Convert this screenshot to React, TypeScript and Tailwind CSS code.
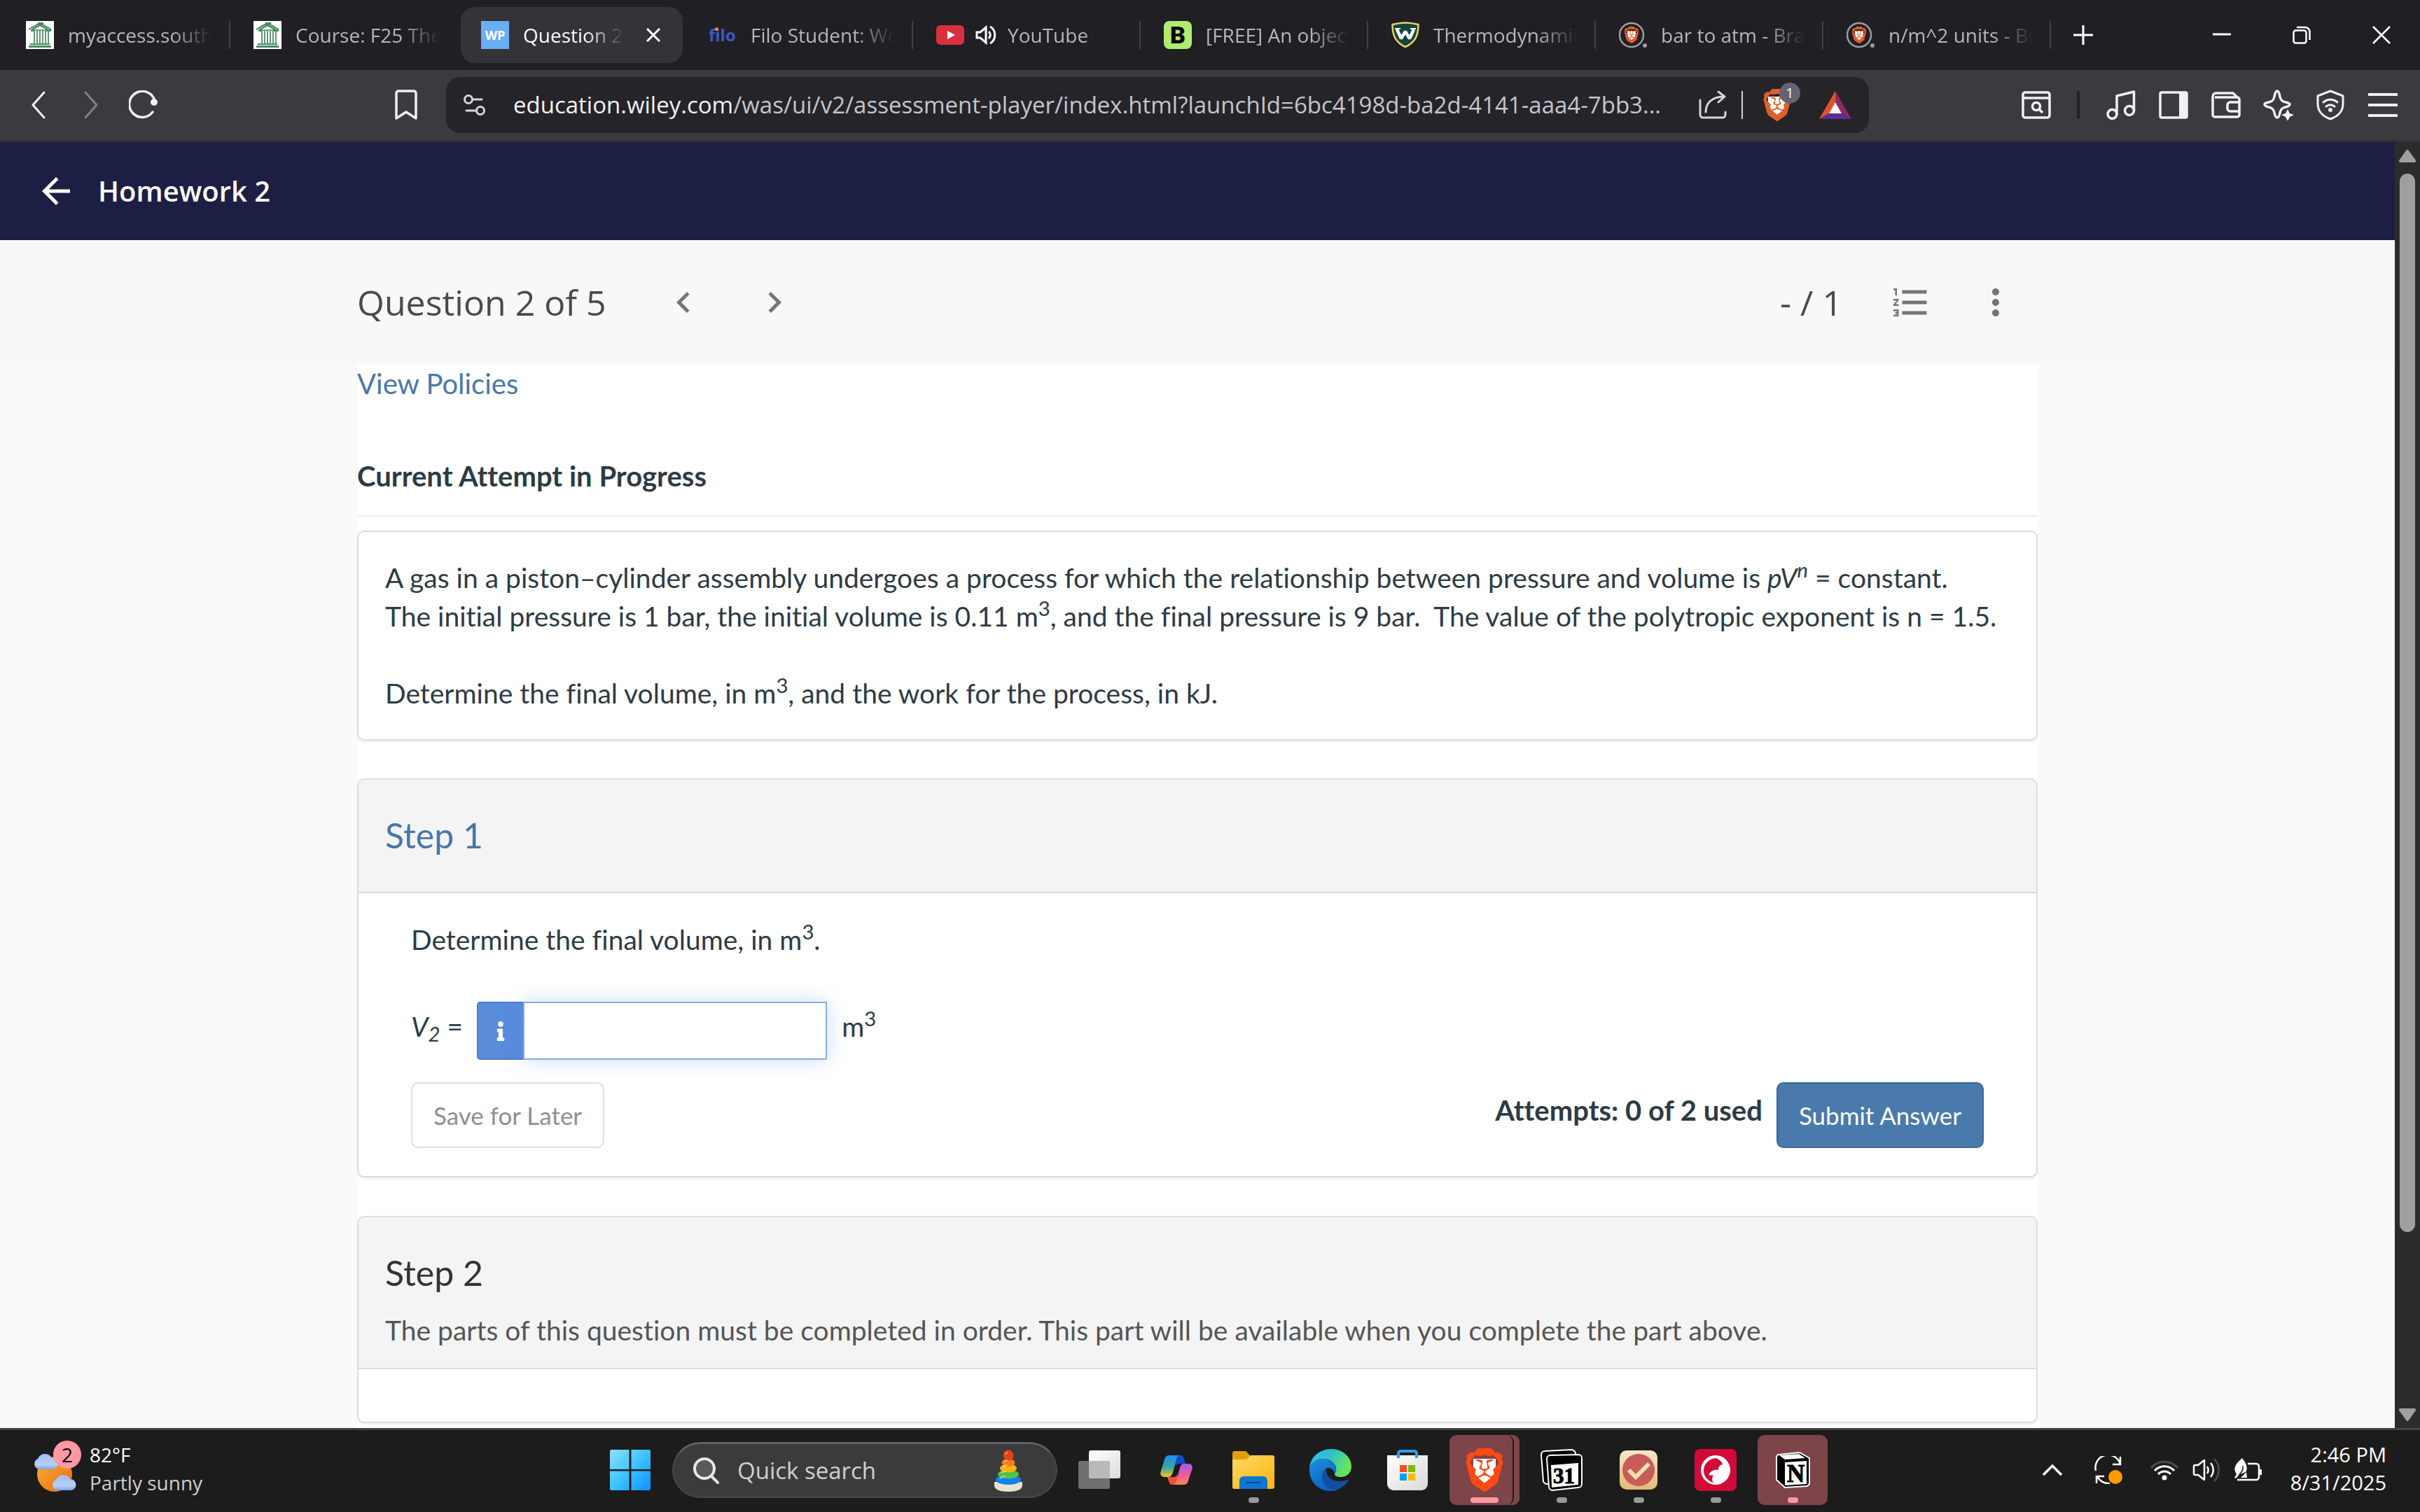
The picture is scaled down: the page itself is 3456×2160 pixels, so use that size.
import type { ReactNode } from 'react';
import { useState } from 'react';
import { FaInfo } from 'react-icons/fa';
import { MdArrowBack, MdChevronLeft, MdChevronRight, MdFormatListNumbered, MdMoreVert } from 'react-icons/md';
import { SiBrave } from 'react-icons/si';

interface Tab { id: string; title: string; icon: ReactNode; playing?: boolean }

function ColumnsIcon() {
  return (
    <svg viewBox="0 0 40 40" className="size-10">
      <path fill="#fff" d="M0 0h40v40H0z" />
      <path fill="none" stroke="#3f8159" strokeWidth="2" d="M4 12 20 3l16 9M9 12l11-6 11 6" />
      <path fill="#4c8a64" d="M17 2h8v4h-8zM4 35h32v3H4zM6 32h28v2H6zM7 12h5v3H7zM29 12h7v3h-7z" />
      <path stroke="#5d9a75" strokeWidth="2" d="M12 14v18M16 14v18M20 14v18M24 14v18M28 14v18M32 14v18" />
      <path stroke="#3f8159" strokeWidth="1.5" d="M11 13h23" />
    </svg>
  );
}

function YoutubeIcon() {
  return (
    <svg viewBox="0 0 40 40" className="size-10">
      <rect y="6" width="40" height="28" rx="6" fill="#d9303e" />
      <path fill="#fff" d="m16 14 11 6-11 6z" />
    </svg>
  );
}

function ShieldIcon() {
  return (
    <svg viewBox="0 0 40 40" className="size-10">
      <path fill="#14453d" stroke="#e9d65c" strokeWidth="2.500" d="M20 2.500c6 0 12 1 18.500 2.500C38.500 22 33 31 20 37 7 31 1.500 22 1.500 5 8 3.500 14 2.500 20 2.500z" />
      <path fill="none" stroke="#fff" strokeWidth="4.500" strokeLinejoin="bevel" d="m8 12 6 13 6-10 6 10 6-13" />
      <path stroke="#fff" strokeWidth="2" d="M5 11h8M27 11h8" />
    </svg>
  );
}

function BraveSearchIcon() {
  return (
    <span className="relative flex size-10 items-center justify-center">
      <svg viewBox="0 0 40 40" className="absolute size-10">
        <circle cx="18" cy="20" r="17" fill="none" stroke="#9c9ca3" strokeWidth="2.500" />
        <circle cx="37" cy="35" r="3" fill="#9c9ca3" />
        <path fill="#fff" d="M12 14h12v12l-6 5-6-5z" />
      </svg>
      <SiBrave className="relative mr-1 size-6 text-[#e9572e]" />
    </span>
  );
}

function FiloIcon() {
  return (
    <span className="relative flex size-10 items-center text-[24px] font-bold text-[#3f57c4]">
      filo
      <span className="absolute top-[9px] left-[9px] size-[5px] rounded-full bg-[#ee8a2c]" />
    </span>
  );
}

const TABS: Tab[] = [
  { id: 'access', title: 'myaccess.southalabama', icon: <ColumnsIcon /> },
  { id: 'course', title: 'Course: F25 Thermo', icon: <ColumnsIcon /> },
  { id: 'question', title: 'Question 2 of 5', icon: <span className="flex size-10 items-center justify-center bg-[#6aaef5] text-[18px] font-bold text-white">WP</span> },
  { id: 'filo', title: 'Filo Student: World', icon: <FiloIcon /> },
  { id: 'youtube', title: 'YouTube', icon: <YoutubeIcon />, playing: true },
  { id: 'brainly', title: '[FREE] An object is', icon: <span className="flex size-10 items-center justify-center rounded-lg bg-[#b1ec70] font-['Roboto',sans-serif] text-[34px] leading-none font-black text-black">B</span> },
  { id: 'thermo', title: 'Thermodynamics', icon: <ShieldIcon /> },
  { id: 'atm', title: 'bar to atm - Brave', icon: <BraveSearchIcon /> },
  { id: 'units', title: 'n/m^2 units - Brave', icon: <BraveSearchIcon /> },
];

const FADE = '[mask-image:linear-gradient(to_right,black_calc(100%-56px),transparent)]';

function BrowserTab({ tab, active, divided, onSelect }: { tab: Tab; active: boolean; divided: boolean; onSelect: () => void }) {
  if (active) {
    return (
      <div className="w-[325px] shrink-0 px-1">
        <div className="flex h-20 items-center rounded-[20px] bg-[#343338] pr-8 pl-[29px] text-white">
          {tab.icon}
          <button onClick={onSelect} className={`ml-5 flex-1 overflow-hidden text-left whitespace-nowrap ${FADE}`}>{tab.title}</button>
          <button aria-label="Close tab" className="ml-8">
            <svg viewBox="0 0 20 20" className="size-5"><path stroke="#fff" strokeWidth="3" d="m1 1 18 18M19 1 1 19" /></svg>
          </button>
        </div>
      </div>
    );
  }
  return (
    <button onClick={onSelect} className="flex h-20 w-[325px] shrink-0 items-center pl-[33px] text-[#b7b7bb]">
      {tab.icon}
      {tab.playing && (
        <svg viewBox="0 0 30 30" className="ml-4 size-[30px]" fill="none" stroke="#fff" strokeWidth="3">
          <path d="M2 11h5l8-7v22l-8-7H2zM19 10c3 3 3 7 0 10M21 3c9 5 9 19 0 24" />
        </svg>
      )}
      <span className={`flex-1 overflow-hidden text-left whitespace-nowrap ${tab.playing ? 'ml-4' : 'ml-5'} ${FADE}`}>{tab.title}</span>
      <span className={`ml-[25px] h-10 w-[2px] ${divided ? 'bg-[#414046]' : ''}`} />
    </button>
  );
}

function TabStrip() {
  const [activeId, setActiveId] = useState('question');
  const activeIndex = TABS.findIndex((tab) => tab.id === activeId);
  return (
    <div className="flex h-[100px] shrink-0 items-center bg-[#201f24] pl-1 text-[28px]">
      {TABS.map((tab, index) => (
        <BrowserTab key={tab.id} tab={tab} active={tab.id === activeId} divided={index !== activeIndex - 1} onSelect={() => setActiveId(tab.id)} />
      ))}
      <button aria-label="New tab" className="ml-8">
        <svg viewBox="0 0 28 28" className="size-7"><path stroke="#fff" strokeWidth="3" d="M14 0v28M0 14h28" /></svg>
      </button>
      <div className="mr-[42px] ml-auto flex items-center gap-[88px] text-white">
        <button aria-label="Minimize"><svg viewBox="0 0 26 26" className="size-[26px]"><path stroke="currentColor" strokeWidth="3" d="M0 12h26" /></svg></button>
        <button aria-label="Restore">
          <svg viewBox="0 0 26 26" className="size-[26px]" fill="none" stroke="currentColor" strokeWidth="2.500">
            <rect x="1.500" y="6.500" width="18" height="18" rx="3" />
            <path d="M6 2h12a6.500 6.500 0 0 1 6.500 6.500V20" />
          </svg>
        </button>
        <button aria-label="Close"><svg viewBox="0 0 26 26" className="size-[26px]"><path stroke="currentColor" strokeWidth="2.500" d="m1 1 24 24M25 1 1 25" /></svg></button>
      </div>
    </div>
  );
}

function Toolbar() {
  return (
    <div className="flex h-[103px] shrink-0 items-center border-b-[3px] border-[#323136] bg-[#3b3a3f] text-[#f1f1f3]">
      <button aria-label="Back" className="ml-[45px]">
        <svg viewBox="0 0 20 40" className="h-10 w-5" fill="none" stroke="currentColor" strokeWidth="3" strokeLinecap="round" strokeLinejoin="round"><path d="M18 2 2 20l16 18" /></svg>
      </button>
      <button aria-label="Forward" className="ml-[55px] text-[#828187]">
        <svg viewBox="0 0 20 40" className="h-10 w-5" fill="none" stroke="currentColor" strokeWidth="3" strokeLinecap="round" strokeLinejoin="round"><path d="m2 2 16 18L2 38" /></svg>
      </button>
      <button aria-label="Reload" className="ml-[44px]">
        <svg viewBox="0 0 42 42" className="size-[42px]" fill="none" stroke="currentColor" strokeWidth="3.500" strokeLinecap="round">
          <path d="M34 31A18.500 18.500 0 1 1 37 15" />
          <circle cx="36" cy="17" r="4" fill="currentColor" strokeWidth="2" />
        </svg>
      </button>
      <button aria-label="Bookmark this page" className="ml-[337px]">
        <svg viewBox="0 0 34 44" className="h-11 w-[34px]" fill="none" stroke="currentColor" strokeWidth="3.500" strokeLinejoin="round"><path d="M6 2h22a3 3 0 0 1 3 3v36L17 32 3 41V5a3 3 0 0 1 3-3z" /></svg>
      </button>
      <div className="ml-10 flex h-20 w-[2032px] items-center rounded-[20px] bg-[#252429] pr-[25px] pl-[25px]">
        <svg viewBox="0 0 32 32" className="size-8 shrink-0" fill="none" stroke="#d6d6da" strokeWidth="3" strokeLinecap="round">
          <circle cx="7" cy="8" r="5.500" /><path d="M13 8h13" />
          <circle cx="24" cy="24" r="5.500" /><path d="M4 24h14" />
        </svg>
        <p className="ml-[39px] flex-1 truncate text-[33px] text-[#c5c5cb]">
          <span className="text-[#f1f1f3]">education.wiley.com</span>/was/ui/v2/assessment-player/index.html?launchId=6bc4198d-ba2d-4141-aaa4-7bb3...
        </p>
        <button aria-label="Share">
          <svg viewBox="0 0 40 40" className="size-10" fill="none" stroke="#d6d6da" strokeWidth="3" strokeLinecap="round" strokeLinejoin="round">
            <path d="M2 13v21a4 4 0 0 0 4 4h28a4 4 0 0 0 4-4v-4M10 30C10 18 18 8 36 8M28 1l9 7-9 8" />
          </svg>
        </button>
        <span className="ml-[21px] h-10 w-[2px] bg-[#d6d6da]" />
        <button aria-label="Brave Shields" className="relative ml-[26px] flex h-12 w-[52px] items-center">
          <svg viewBox="0 0 46 48" className="absolute h-12 w-[46px]"><path fill="#fff" d="M10 12h26v20L23 42 10 32z" /></svg>
          <SiBrave className="relative size-[46px] text-[#df5f2a]" />
          <span className="absolute -top-2 -right-1 flex size-[30px] items-center justify-center rounded-full bg-[#646370] text-[20px] text-white">1</span>
        </button>
        <button aria-label="Brave Rewards" className="ml-[31px]">
          <svg viewBox="0 0 46 40" className="h-10 w-[46px]">
            <path fill="#e0532f" d="M23 0v16L14 32 0 40z" />
            <path fill="#8d2a62" d="M23 0v16l9 16 14 8z" />
            <path fill="#5e2d91" d="m0 40 14-8h18l14 8z" />
            <path fill="#fff" d="m23 16 9 16H14z" />
          </svg>
        </button>
      </div>
      <div className="mr-8 ml-auto flex items-center">
        <button aria-label="Search tabs">
          <svg viewBox="0 0 42 42" className="size-[42px]" fill="none" stroke="currentColor" strokeWidth="3.500">
            <rect x="2" y="3" width="38" height="36" rx="3" /><path d="M2 11h38" />
            <circle cx="21" cy="23" r="5.500" /><path d="m25 27 5 5" />
          </svg>
        </button>
        <span className="ml-[37px] h-10 w-1 rounded bg-[#201f24]" />
        <button aria-label="Media" className="ml-[38px]">
          <svg viewBox="0 0 42 42" className="size-[42px]" fill="none" stroke="currentColor" strokeWidth="3.500">
            <circle cx="8.500" cy="34" r="6.500" /><circle cx="33" cy="29" r="6.500" />
            <path strokeLinejoin="round" d="M15 34V8l24.500-6v27" />
          </svg>
        </button>
        <button aria-label="Sidebar" className="ml-[33px]">
          <svg viewBox="0 0 42 42" className="size-[42px]"><rect x="2" y="3" width="38" height="36" rx="2" fill="none" stroke="currentColor" strokeWidth="3.500" /><path fill="currentColor" d="M29 3h11v36H29z" /></svg>
        </button>
        <button aria-label="Wallet" className="ml-[33px]">
          <svg viewBox="0 0 42 42" className="size-[42px]" fill="none" stroke="currentColor" strokeWidth="3.500" strokeLinejoin="round">
            <path d="M2 9v26a3 3 0 0 0 3 3h32a3 3 0 0 0 3-3V13a3 3 0 0 0-3-3H5M2 9a5 5 0 0 1 5-5h24l6 6" />
            <path d="M40 17H27a4 4 0 0 0-4 4v5a4 4 0 0 0 4 4h13" />
          </svg>
        </button>
        <button aria-label="Leo AI" className="ml-8">
          <svg viewBox="0 0 44 44" className="size-11" fill="none" stroke="currentColor" strokeWidth="3.500" strokeLinejoin="round">
            <path d="M20 2c2 0 3 3 4 8s3 7 8 8c4 1 6 1.500 6 3s-2 3-6 4c-5 1-7 3-8 8s-2 7-4 7-3-2-4-7-3-7-8-8c-4-1-6-2-6-4s2-2 6-3c5-1 7-3 8-8s2-8 4-8z" />
            <path fill="currentColor" stroke="none" d="m35 28 3 6 6 2-6 3-3 6-3-6-6-3 6-2z" />
          </svg>
        </button>
        <button aria-label="VPN" className="ml-8">
          <svg viewBox="0 0 40 44" className="h-11 w-10" fill="none" stroke="currentColor" strokeWidth="3" strokeLinejoin="round" strokeLinecap="round">
            <path d="m20 2 18 7v11c0 12-7 18-18 22C9 38 2 32 2 20V9z" />
            <path d="M10 18c6-5 14-5 20 0M14 24c4-3 8-3 12 0" /><circle cx="20" cy="29" r="1.500" />
          </svg>
        </button>
        <button aria-label="Menu" className="ml-[34px]">
          <svg viewBox="0 0 42 36" className="h-9 w-[42px]"><path stroke="currentColor" strokeWidth="4" d="M0 3h42M0 18h42M0 33h42" /></svg>
        </button>
      </div>
    </div>
  );
}

function PageHeader() {
  return (
    <>
      <header className="flex h-[140px] shrink-0 items-center bg-[#1c1f43] pl-[50px] text-white">
        <a href="#assignments" aria-label="Back to assignments"><MdArrowBack className="size-[60px]" /></a>
        <h1 className="ml-[30px] text-[40px] font-semibold">Homework 2</h1>
      </header>
      <div className="h-[178px] shrink-0 bg-[#f8f8f8]">
        <div className="mx-auto flex h-full w-[2400px] items-center text-[#4a4a4a]">
          <h2 className="text-[50px]">Question 2 of 5</h2>
          <button aria-label="Previous question" className="ml-[80px] text-[#757575]"><MdChevronLeft className="size-[60px]" /></button>
          <button aria-label="Next question" className="ml-[70px] text-[#757575]"><MdChevronRight className="size-[60px]" /></button>
          <p className="ml-auto text-[50px]">- / 1</p>
          <button aria-label="Question list" className="ml-[68px] text-[#757575]"><MdFormatListNumbered className="size-[60px]" /></button>
          <button aria-label="More options" className="mr-[30px] ml-[61px] text-[#757575]"><MdMoreVert className="size-[60px]" /></button>
        </div>
      </div>
    </>
  );
}

const CARD = 'rounded-[10px] border-2 border-[#dcdcdc] bg-white shadow-[0_3px_3px_rgba(0,0,0,0.05)]';

function Assessment() {
  const [answer, setAnswer] = useState('');
  return (
    <main className="mx-auto w-[2400px] flex-1 overflow-hidden bg-white font-['Lato',sans-serif] text-[40px] leading-[55px] text-[#2d3b45] [font-variant-ligatures:none]">
      <a href="#policies" className="text-[#4877a9]">View Policies</a>
      <p className="mt-[77px] font-bold">Current Attempt in Progress</p>
      <hr className="mt-7 border-t-2 border-[#eee]" />
      <section className={`mt-5 px-[38px] py-[38px] text-[39px] ${CARD}`}>
        <p>
          A gas in a piston–cylinder assembly undergoes a process for which the relationship between pressure and volume is <i>pV<sup>n</sup></i> = constant.
          <br />
          The initial pressure is 1 bar, the initial volume is 0.11 m<sup>3</sup>, and the final pressure is 9 bar. &nbsp;The value of the polytropic exponent is n = 1.5.
        </p>
        <p className="mt-[55px]">Determine the final volume, in m<sup>3</sup>, and the work for the process, in kJ.</p>
      </section>

      <section className={`mt-[54px] ${CARD}`}>
        <h3 className="rounded-t-lg border-b-2 border-[#dcdcdc] bg-[#f4f4f4] px-[38px] pt-[52px] pb-[53px] text-[50px] text-[#4877a9]">Step 1</h3>
        <div className="px-[75px] pt-[39px] pb-10">
          <p className="text-[39px]">Determine the final volume, in m<sup>3</sup>.</p>
          <div className="mt-[61px] flex items-start text-[39px]">
            <label htmlFor="volume" className="pt-2"><i>V<sub>2</sub></i> =</label>
            <button aria-label="Tolerance information" className="ml-5 flex h-[83px] w-[66px] items-center justify-center rounded-l-[5px] border-y-2 border-l-2 border-[#4a7bcb] bg-[#598cdb] text-white"><FaInfo className="size-7" /></button>
            <input id="volume" value={answer} onChange={(event) => setAnswer(event.target.value)} className="h-[83px] w-[434px] border-2 border-[#85ace6] bg-white px-4 shadow-[0_0_30px_rgba(80,140,225,0.3)] outline-none" />
            <span className="pt-2 pl-[21px]">m<sup>3</sup></span>
          </div>
          <div className="mt-8 flex items-start">
            <button className="h-[94px] rounded-[10px] border-2 border-[#dedede] px-[30px] text-[35px] text-[#8f8f8f]">Save for Later</button>
            <p className="ml-auto pt-[13px] font-bold">Attempts: 0 of 2 used</p>
            <button className="ml-5 h-[94px] rounded-[10px] border-2 border-[#3c6896] bg-[#4a7aab] px-[30px] text-[35px] text-white">Submit Answer</button>
          </div>
        </div>
      </section>

      <section className={`mt-[55px] ${CARD}`}>
        <div className="rounded-t-lg border-b-2 border-[#dcdcdc] bg-[#f4f4f4] px-[38px] pt-[52px] pb-[26px]">
          <h3 className="text-[50px] text-[#333]">Step 2</h3>
          <p className="mt-[27px] text-[39px] text-[#555]">The parts of this question must be completed in order. This part will be available when you complete the part above.</p>
        </div>
        <div className="h-[75px]" />
      </section>
    </main>
  );
}

function Scrollbar() {
  return (
    <div className="flex w-9 shrink-0 flex-col items-center bg-[#2c2c2c] pt-[11px] pb-[10px]">
      <svg viewBox="0 0 24 18" className="h-[18px] w-6"><path fill="#9f9f9f" stroke="#9f9f9f" strokeWidth="4" strokeLinejoin="round" d="m12 2 10 14H2z" /></svg>
      <div className="mt-4 h-[1512px] w-[22px] rounded-full bg-[#9f9f9f]" />
      <svg viewBox="0 0 24 18" className="mt-auto h-[18px] w-6"><path fill="#9f9f9f" stroke="#9f9f9f" strokeWidth="4" strokeLinejoin="round" d="M2 2h20L12 16z" /></svg>
    </div>
  );
}

function WeatherIcon() {
  const cloud = 'M8 24a8 8 0 0 1-1-15A11 11 0 0 1 27 8a8 8 0 0 1 1 16z';
  return (
    <span className="relative h-[70px] w-[68px]">
      <svg viewBox="0 0 68 70" className="h-[70px] w-[68px]">
        <defs>
          <linearGradient id="sun" x2="1" y2="1"><stop stopColor="#f5b136" /><stop offset="1" stopColor="#ee6a10" /></linearGradient>
          <linearGradient id="cloud" x2="0" y2="1"><stop stopColor="#9dbdf4" /><stop offset="0.700" stopColor="#b7d0fa" /><stop offset="1" stopColor="#7fa2e6" /></linearGradient>
        </defs>
        <circle cx="30" cy="43" r="25" fill="url(#sun)" />
        <path fill="url(#cloud)" d={cloud} transform="translate(-1 12)" />
        <path fill="url(#cloud)" d={cloud} transform="translate(25 42)" />
      </svg>
      <span className="absolute -top-[5px] right-0 flex size-10 items-center justify-center rounded-full bg-[#ff99a4] text-[28px] text-black">2</span>
    </span>
  );
}

function StartIcon() {
  return (
    <svg viewBox="0 0 60 60" className="size-[60px]">
      <defs><linearGradient id="start" x1="0" y1="0" x2="60" y2="60" gradientUnits="userSpaceOnUse"><stop stopColor="#8ce4ff" /><stop offset="0.500" stopColor="#3ec2ff" /><stop offset="1" stopColor="#0a90ff" /></linearGradient></defs>
      <path fill="url(#start)" d="M3 1h25.500v28H1V3a2 2 0 0 1 2-2zM31.500 1H57a2 2 0 0 1 2 2v26H31.500zM1 31.500h27.500V59H3a2 2 0 0 1-2-2zM31.500 31.500H59V57a2 2 0 0 1-2 2H31.500z" />
    </svg>
  );
}

function StackToy() {
  return (
    <svg viewBox="0 0 42 60" className="h-[60px] w-[42px]">
      <path fill="#e9e2cf" d="M1 46h40v5c0 6-8 9-20 9S1 57 1 51z" />
      <ellipse cx="21" cy="43" rx="18" ry="7" fill="#0f82ee" />
      <ellipse cx="21" cy="35" rx="15" ry="6.500" fill="#53bf45" />
      <ellipse cx="21" cy="26.500" rx="12" ry="6" fill="#f5b50e" />
      <ellipse cx="21" cy="18.500" rx="9.500" ry="5.500" fill="#f47b1c" />
      <ellipse cx="21" cy="8" rx="7.500" ry="7.500" fill="#e2411f" />
      <path fill="none" stroke="#fff" strokeOpacity="0.450" strokeWidth="2" strokeLinecap="round" d="M9 41c2-2 5-3 8-3M11 33c2-2 4-2 6-2M14 24c1-1 3-2 5-2M16 17l3-2M17 6l2-2" />
    </svg>
  );
}

function TaskViewIcon() {
  return (
    <svg viewBox="0 0 60 60" className="size-[60px]">
      <defs><linearGradient id="pane" x2="1" y2="1"><stop stopColor="#fff" /><stop offset="1" stopColor="#dcdcdc" /></linearGradient></defs>
      <rect x="15" y="2" width="45" height="40" rx="3" fill="url(#pane)" />
      <rect y="17" width="45" height="40" rx="3" fill="#6f6f6f" />
      <path fill="#b9b9b9" d="M15 17h28a2 2 0 0 1 2 2v23H17a2 2 0 0 1-2-2z" />
    </svg>
  );
}

function CopilotIcon() {
  return (
    <svg viewBox="0 0 46 42" className="h-[42px] w-[46px]">
      <defs>
        <linearGradient id="copilotLeft" x2="0" y2="1"><stop stopColor="#1a8df0" /><stop offset="0.550" stopColor="#3aa6a0" /><stop offset="1" stopColor="#f0c81e" /></linearGradient>
        <linearGradient id="copilotRight" x2="0" y2="1"><stop stopColor="#a45cf0" /><stop offset="0.550" stopColor="#ef5a9d" /><stop offset="1" stopColor="#fb8a4e" /></linearGradient>
      </defs>
      <path fill="#1647c9" d="M20 0h9c3 0 4 2 5 5l2 7h-9c-3 0-4 1-5 4z" />
      <path fill="#ee4f33" d="M10 31h9c3 0 4-1 5-4l2 9c-1 4-3 6-6 6h-3c-3 0-4-2-5-5z" />
      <path fill="url(#copilotLeft)" d="M13 0h16c-4 0-5 2-6 6l-5 18c-1 4-3 7-7 7H6c-5 0-7-4-5-9L6 6c1-4 3-6 7-6z" />
      <path fill="url(#copilotRight)" d="M33 42H17c4 0 5-2 6-6l5-18c1-4 3-6 7-6h5c5 0 7 4 5 9l-5 15c-1 4-3 6-7 6z" />
    </svg>
  );
}

function ExplorerIcon() {
  return (
    <svg viewBox="0 0 60 54" className="h-[54px] w-[60px]">
      <defs><linearGradient id="folder" x2="1" y2="1"><stop stopColor="#ffd866" /><stop offset="1" stopColor="#fcb50e" /></linearGradient></defs>
      <path fill="#e2a006" d="M3 0h16l6 6v10H0V3a3 3 0 0 1 3-3z" />
      <path fill="url(#folder)" d="M0 12h20l6-6h31a3 3 0 0 1 3 3v42a3 3 0 0 1-3 3H3a3 3 0 0 1-3-3z" />
      <path fill="#0f75cf" d="M16 36h28a6 6 0 0 1 6 6v12H10V42a6 6 0 0 1 6-6z" />
      <path stroke="#0a4a91" strokeWidth="2" d="M19 45h22" />
    </svg>
  );
}

function EdgeIcon() {
  return (
    <svg viewBox="0 0 60 60" className="size-[60px]">
      <defs>
        <linearGradient id="edgeTop" x2="1" y2="0.400"><stop stopColor="#35b8f5" /><stop offset="0.500" stopColor="#2bc3c9" /><stop offset="1" stopColor="#66e55a" /></linearGradient>
        <linearGradient id="edgeSide" x2="0.500" y2="1"><stop stopColor="#1b8fe0" /><stop offset="1" stopColor="#0b63c4" /></linearGradient>
      </defs>
      <path fill="url(#edgeTop)" d="M0 28C1 12 14 0 31 0c17 0 29 12 29 25 0 9-7 15-15 15-6 0-9-2-9-4s3-3 2-9C37 20 29 14 19 14 9 14 2 21 0 28z" />
      <path fill="url(#edgeSide)" d="M0 30c0-9 8-16 18-16 11 0 20 7 20 15 0 2-1 4-2 6-1-5-5-8-9-8-5 0-8 5-8 12 0 11 8 20 20 20-3 1-6 1-9 1C13 60 0 47 0 30z" />
      <path fill="#11509f" d="M24 28c-4 3-6 7-6 12 0 11 9 19 20 19 8-3 14-8 18-14 0-1-1-2-2-1-4 2-8 2-11 2-11 0-20-7-19-18z" />
    </svg>
  );
}

function StoreIcon() {
  return (
    <svg viewBox="0 0 58 60" className="h-[60px] w-[58px]">
      <defs><linearGradient id="bag" x2="1" y2="1"><stop stopColor="#fff" /><stop offset="1" stopColor="#d9d9d9" /></linearGradient></defs>
      <path fill="url(#bag)" d="M0 9h58v41a9 9 0 0 1-9 9H9a9 9 0 0 1-9-9z" />
      <path fill="none" stroke="#27a5ee" strokeWidth="4" d="M16 13V6a3 3 0 0 1 3-3h20a3 3 0 0 1 3 3v7" />
      <path fill="#f25022" d="M18 23h10v10H18z" /><path fill="#7fba00" d="M30 23h10v10H30z" />
      <path fill="#00a4ef" d="M18 35h10v10H18z" /><path fill="#ffb900" d="M30 35h10v10H30z" />
    </svg>
  );
}

function CalendarIcon() {
  return (
    <svg viewBox="0 0 60 60" className="size-[60px]">
      <path fill="#000" stroke="#fff" strokeWidth="2" d="M6 3 44 1a6 6 0 0 1 6 6l-2 40-38 3a6 6 0 0 1-6-4L1 8a5 5 0 0 1 5-5z" />
      <path fill="#000" stroke="#fff" strokeWidth="2" d="m14 9 40-1a5 5 0 0 1 5 5v37a5 5 0 0 1-5 5l-37 4a5 5 0 0 1-5-5L9 14a5 5 0 0 1 5-5z" />
      <path fill="#fff" d="m15 23 39-3v31l-38 4z" />
      <text x="18" y="49" fontFamily="Liberation Serif, serif" fontSize="31" fontWeight="700" fill="#000" stroke="#000">31</text>
    </svg>
  );
}

function TodoIcon() {
  return (
    <svg viewBox="0 0 54 56" className="h-14 w-[54px]">
      <defs><linearGradient id="todo" x2="0" y2="1"><stop stopColor="#f6e6cf" /><stop offset="1" stopColor="#e2bb74" /></linearGradient></defs>
      <rect width="54" height="56" rx="10" fill="url(#todo)" />
      <circle cx="27" cy="28" r="23" fill="#c95b5b" />
      <path fill="none" stroke="#f3e3ac" strokeWidth="6" d="m13 28 10 10 19-19" />
    </svg>
  );
}

function RedBirdIcon() {
  return (
    <svg viewBox="0 0 60 60" className="size-[60px]">
      <rect width="60" height="60" rx="8" fill="#d20a37" />
      <circle cx="30" cy="30" r="21" fill="#fff" />
      <path fill="#d20a37" d="M30 13c-10 1-17 9-17 18 0 8 6 15 14 17-3-4-2-7 0-10l-7-1c3-6 8-8 14-7-1-4 2-7 6-8-1-4-5-8-10-9z" />
    </svg>
  );
}

function NotionIcon() {
  return (
    <svg viewBox="0 0 52 52" className="size-[52px]">
      <path fill="#000" stroke="#fff" strokeWidth="2" strokeLinejoin="round" d="m5 4 31-3 14 8v37l-3 3-32 2L3 40V7z" />
      <path fill="#fff" d="m7 5 28-2 9 6-29 2zM15 15l31-2v33l-31 2z" />
      <text x="18" y="43" fontFamily="Liberation Serif, serif" fontSize="35" fontWeight="700" fill="#000" stroke="#000">N</text>
    </svg>
  );
}

function BraveIcon() {
  return (
    <span className="relative flex size-[62px] items-center justify-center">
      <svg viewBox="0 0 60 60" className="absolute size-[60px]"><path fill="#fff" d="M14 14h32v26L30 52 14 40z" /></svg>
      <SiBrave className="relative size-[62px] text-[#fb4a14]" />
    </span>
  );
}

const APPS: { name: string; icon: ReactNode; state?: 'running' | 'active' | 'alert' }[] = [
  { name: 'Task view', icon: <TaskViewIcon /> },
  { name: 'Copilot', icon: <CopilotIcon /> },
  { name: 'File Explorer', icon: <ExplorerIcon />, state: 'running' },
  { name: 'Edge', icon: <EdgeIcon /> },
  { name: 'Microsoft Store', icon: <StoreIcon /> },
  { name: 'Brave', icon: <BraveIcon />, state: 'active' },
  { name: 'Notion Calendar', icon: <CalendarIcon />, state: 'running' },
  { name: 'Tasks', icon: <TodoIcon />, state: 'running' },
  { name: 'Bird', icon: <RedBirdIcon />, state: 'running' },
  { name: 'Notion', icon: <NotionIcon />, state: 'alert' },
];

function Taskbar() {
  return (
    <footer className="relative flex h-[120px] shrink-0 items-center justify-between bg-[#1c1c1c] text-white shadow-[inset_0_3px_0_#434343]">
      <button className="ml-12 flex items-center gap-3 pb-1 text-left text-[28px] leading-10">
        <WeatherIcon />
        <span>82°F<span className="block text-[#cfcfcf]">Partly sunny</span></span>
      </button>
      <nav className="absolute inset-0 mx-auto flex w-fit items-center gap-[10px] pl-1">
        <button aria-label="Start" className="flex size-[100px] items-center justify-center"><StartIcon /></button>
        <label className="flex h-20 w-[550px] items-center rounded-full border-2 border-t-[3px] border-[#484848] border-t-[#606060] bg-[#3b3b3b] px-[27px]">
          <svg viewBox="0 0 38 40" className="h-10 w-[38px] shrink-0" fill="none" stroke="#e8e8e8" strokeWidth="4" strokeLinecap="round"><circle cx="17" cy="17" r="14" fill="#5a5a5a" /><path d="m27 28 9 9" /></svg>
          <input type="search" aria-label="Search" placeholder="Quick search" className="ml-[26px] w-0 flex-1 bg-transparent text-[33px] outline-none placeholder:text-[#cfcfcf]" />
          <span className="mr-5"><StackToy /></span>
        </label>
        {APPS.map((app) => (
          <button key={app.name} aria-label={app.name} className={`relative flex size-[100px] items-center justify-center rounded-[10px] ${app.state === 'active' || app.state === 'alert' ? 'bg-[#7d444a]' : ''}`}>
            {app.state === 'active' && <span className="absolute inset-y-0 right-0 w-5 rounded-r-[10px] border-r-[10px] border-[#7d444a]"><span className="block h-full w-3 rounded-r-[10px] border-r-2 border-[#1c1c1c]" /></span>}
            {app.icon}
            {app.state === 'active' && <span className="absolute bottom-[3px] h-2 w-10 rounded-full bg-[#ff99a4]" />}
            {app.state === 'alert' && <span className="absolute bottom-[3px] h-2 w-[15px] rounded-full bg-[#ff99a4]" />}
            {app.state === 'running' && <span className="absolute bottom-[3px] h-2 w-[15px] rounded-full bg-[#989898]" />}
          </button>
        ))}
      </nav>
      <div className="mr-12 flex items-center">
        <button aria-label="Show hidden icons">
          <svg viewBox="0 0 28 16" className="h-4 w-7" fill="none" stroke="#fff" strokeWidth="3.500"><path d="M1 15 14 2l13 13" /></svg>
        </button>
        <svg viewBox="0 0 40 40" className="ml-[46px] size-10" fill="none" stroke="#fff" strokeWidth="2.500">
          <path d="M2 21A18 18 0 0 1 37 12M37 1v11H26M22 39A18 18 0 0 1 4 29M3 39V29h11" />
          <circle cx="30" cy="30" r="10" fill="#ff9a00" stroke="none" />
        </svg>
        <button aria-label="Network, volume and battery" className="ml-10 flex items-center gap-5">
          <svg viewBox="0 0 40 32" className="h-8 w-10" fill="none" stroke="#fff" strokeWidth="3">
            <path stroke="#4d4d4d" d="M1 13a25 25 0 0 1 38 0" /><path d="M6 17a19 19 0 0 1 28 0M11 22a12 12 0 0 1 18 0" />
            <circle cx="20" cy="27" r="3.500" fill="#fff" stroke="none" />
          </svg>
          <svg viewBox="0 0 40 34" className="h-[34px] w-10" fill="none" stroke="#fff" strokeWidth="2.500">
            <path strokeLinejoin="round" d="M4 10h4l9-7v28l-9-7H4a2 2 0 0 1-2-2V12a2 2 0 0 1 2-2z" />
            <path d="M21 12c2 3 2 7 0 10M26 7c5 6 5 14 0 20" /><path stroke="#4d4d4d" d="M31 1c9 9 9 23 0 32" />
          </svg>
          <svg viewBox="0 0 40 34" className="h-[34px] w-10" fill="none" stroke="#fff" strokeWidth="2.500">
            <path d="M19 8h12a4 4 0 0 1 4 4v15a4 4 0 0 1-4 4H4" />
            <path fill="#fff" stroke="none" d="M35 16h4v8h-4zM11 0c5 7 8 11 6 19-3 2-6 3-10 4l-5 6-2-1 3-5C-2 15 0 10 11 0z" />
            <path stroke="#1c1c1c" strokeWidth="1.500" d="M12 11c1 6-1 9-5 12" /><path fill="#fff" stroke="none" d="m17 20 1 8H9z" />
          </svg>
        </button>
        <button className="ml-10 pb-1 text-right text-[29px] leading-10">2:46 PM<br />8/31/2025</button>
      </div>
    </footer>
  );
}

export default function App() {
  return (
    <div className="flex h-screen flex-col overflow-hidden font-['Open_Sans',sans-serif]">
      <TabStrip />
      <Toolbar />
      <div className="flex min-h-0 flex-1">
        <div className="flex min-w-0 flex-1 flex-col bg-[#fafafa]">
          <PageHeader />
          <Assessment />
        </div>
        <Scrollbar />
      </div>
      <Taskbar />
    </div>
  );
}
